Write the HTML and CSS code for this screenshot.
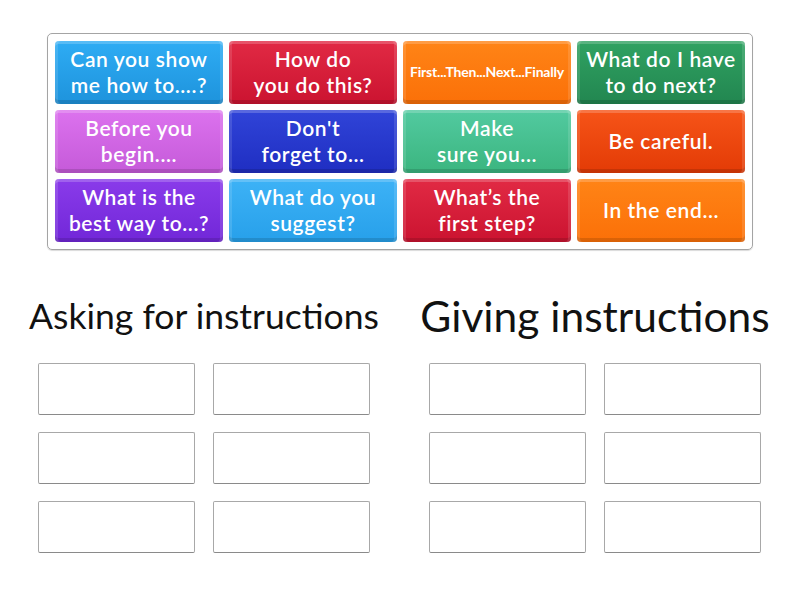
FILE: index.html
```html
<!DOCTYPE html>
<html lang="en">
<head>
<meta charset="utf-8">
<title>Group sort</title>
<link rel="stylesheet" href="styles.css">
</head>
<body>
<div class="page">
  <div class="bank">
    <div class="tile blue">Can you show<br>me how to....?</div>
    <div class="tile red">How do<br>you do this?</div>
    <div class="tile orange small">First...Then...Next...Finally</div>
    <div class="tile green">What do I have<br>to do next?</div>
    <div class="tile pink">Before you<br>begin....</div>
    <div class="tile navy">Don't<br>forget to...</div>
    <div class="tile mint">Make<br>sure you...</div>
    <div class="tile redorange">Be careful.</div>
    <div class="tile purple">What is the<br>best way to...?</div>
    <div class="tile sky">What do you<br>suggest?</div>
    <div class="tile red">What’s the<br>first step?</div>
    <div class="tile orange">In the end...</div>
  </div>
  <div class="groups">
    <div class="group">
      <h2 class="title">Asking for instructions</h2>
      <div class="slots">
        <div class="slot"></div><div class="slot"></div>
        <div class="slot"></div><div class="slot"></div>
        <div class="slot"></div><div class="slot"></div>
      </div>
    </div>
    <div class="group">
      <h2 class="title big">Giving instructions</h2>
      <div class="slots">
        <div class="slot"></div><div class="slot"></div>
        <div class="slot"></div><div class="slot"></div>
        <div class="slot"></div><div class="slot"></div>
      </div>
    </div>
  </div>
</div>
</body>
</html>
```
FILE: styles.css
```css
html, body {
  margin: 0;
  padding: 0;
  background: #ffffff;
}
body {
  width: 800px;
  height: 600px;
  overflow: hidden;
  font-family: "Lato", "Open Sans", sans-serif;
}
.page {
  padding-top: 33px;
}
.bank {
  margin-left: 47px;
  width: 706px;
  box-sizing: border-box;
  padding: 7px;
  border: 1px solid #a4a4a4;
  border-radius: 5px;
  display: grid;
  grid-template-columns: repeat(4, 1fr);
  gap: 6px;
  box-shadow: 0 1px 1px rgba(0,0,0,0.15);
}
.tile {
  height: 63px;
  box-sizing: border-box;
  border-radius: 4px;
  display: flex;
  align-items: center;
  justify-content: center;
  text-align: center;
  color: #fff;
  font-family: "Lato", sans-serif;
  font-weight: 600;
  font-size: 21px;
  line-height: 25.5px;
  padding: 0 2px 2px;
  letter-spacing: 0.6px;
  white-space: nowrap;
  box-shadow: inset 0 3px 0 rgba(255,255,255,0.2), inset 3px 0 0 rgba(255,255,255,0.12), inset -3px 0 0 rgba(255,255,255,0.12), inset 0 -4px 0 rgba(0,0,0,0.13);
}
.tile.small {
  font-size: 14px;
  font-weight: 700;
  letter-spacing: -0.2px;
}
.blue { background: linear-gradient(#2eacf4, #1e93dc); }
.red { background: linear-gradient(#e12a44, #cb1330); }
.orange { background: linear-gradient(#ff8416, #fb7008); }
.green { background: linear-gradient(#30a262, #228650); }
.pink { background: linear-gradient(#dc72ee, #c55ad9); }
.navy { background: linear-gradient(#3044d8, #1f2ec2); }
.mint { background: linear-gradient(#52caa0, #3bb57f); }
.redorange { background: linear-gradient(#f65418, #e33b06); }
.purple { background: linear-gradient(#8a3bea, #7127d8); }
.sky { background: linear-gradient(#3db2f6, #27a0ea); }

.groups {
  display: flex;
  margin-top: 44px;
  margin-left: 38px;
  gap: 59px;
}
.group {
  width: 332px;
  display: flex;
  flex-direction: column;
  align-items: center;
}
.title {
  margin: 0 0 25px;
  height: 44px;
  line-height: 44px;
  font-weight: 400;
  font-size: 35.5px;
  color: #111;
  white-space: nowrap;
  font-family: "Lato", sans-serif;
}
.title.big {
  font-size: 42.5px;
}
.slots {
  width: 100%;
  display: grid;
  grid-template-columns: 157px 157px;
  justify-content: space-between;
  row-gap: 17px;
}
.slot {
  height: 52px;
  box-sizing: border-box;
  border: 1px solid #a8a8a8;
  border-bottom-color: #8a8a8a;
  border-radius: 2px;
  background: #fff;
}
```
